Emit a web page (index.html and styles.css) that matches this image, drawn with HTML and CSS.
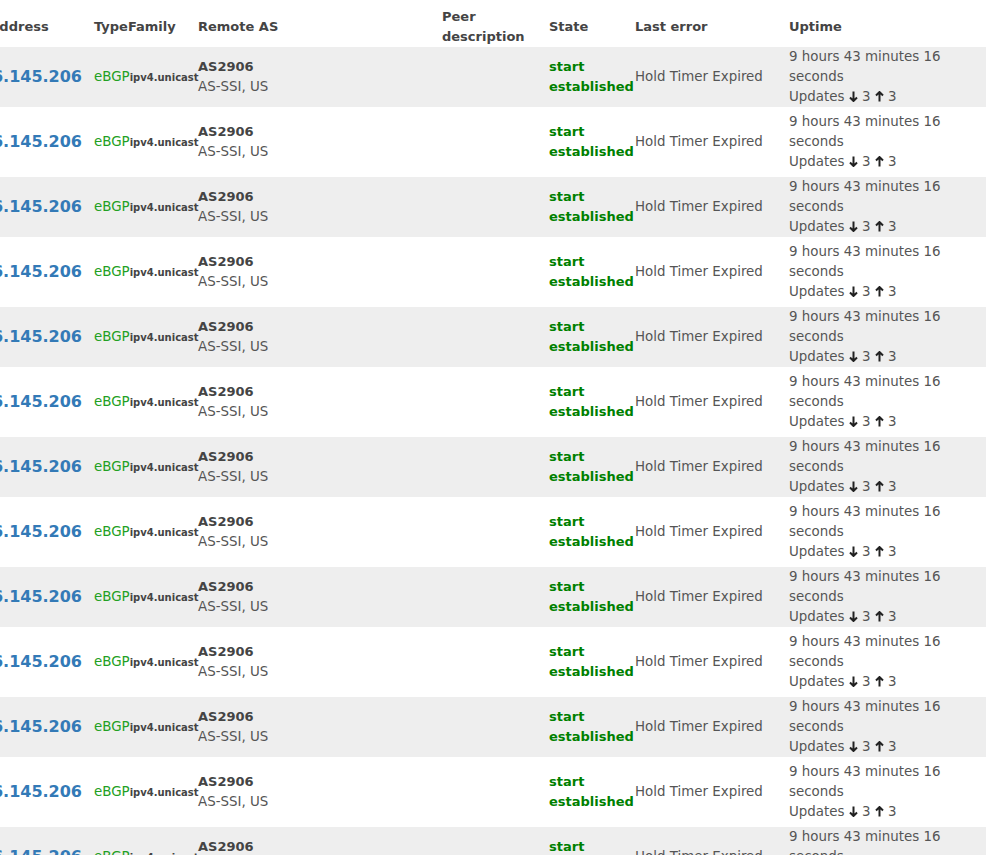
FILE: index.html
```html
<!DOCTYPE html>
<html>
<head>
<meta charset="utf-8">
<link rel="stylesheet" href="styles.css">
</head>
<body>
<div class="wrap">
<table class="peers">
<thead>
<tr>
<th class="c-addr">Address</th>
<th class="c-type">TypeFamily</th>
<th class="c-as">Remote AS</th>
<th class="c-desc">Peer<br>description</th>
<th class="c-state">State</th>
<th class="c-err">Last error</th>
<th class="c-up">Uptime</th>
</tr>
</thead>
<tbody>
<tr class="odd"><td class="addr">93.56.145.206</td><td><span class="ebgp">eBGP</span><span class="fam">ipv4.unicast</span></td><td><b>AS2906</b><br>AS-SSI, US</td><td></td><td class="state">start<br>established</td><td>Hold Timer Expired</td><td>9 hours 43 minutes 16 seconds<div class="upd">Updates <svg class="arr" viewBox="0 0 9 11"><path d="M4.5 0.5V10M1 6.5l3.5 3.5 3.5-3.5"/></svg> 3 <svg class="arr" viewBox="0 0 9 11"><path d="M4.5 10.5V1M1 4.5l3.5-3.5 3.5 3.5"/></svg> 3</div></td></tr>
<tr class="even"><td class="addr">93.56.145.206</td><td><span class="ebgp">eBGP</span><span class="fam">ipv4.unicast</span></td><td><b>AS2906</b><br>AS-SSI, US</td><td></td><td class="state">start<br>established</td><td>Hold Timer Expired</td><td>9 hours 43 minutes 16 seconds<div class="upd">Updates <svg class="arr" viewBox="0 0 9 11"><path d="M4.5 0.5V10M1 6.5l3.5 3.5 3.5-3.5"/></svg> 3 <svg class="arr" viewBox="0 0 9 11"><path d="M4.5 10.5V1M1 4.5l3.5-3.5 3.5 3.5"/></svg> 3</div></td></tr>
<tr class="odd"><td class="addr">93.56.145.206</td><td><span class="ebgp">eBGP</span><span class="fam">ipv4.unicast</span></td><td><b>AS2906</b><br>AS-SSI, US</td><td></td><td class="state">start<br>established</td><td>Hold Timer Expired</td><td>9 hours 43 minutes 16 seconds<div class="upd">Updates <svg class="arr" viewBox="0 0 9 11"><path d="M4.5 0.5V10M1 6.5l3.5 3.5 3.5-3.5"/></svg> 3 <svg class="arr" viewBox="0 0 9 11"><path d="M4.5 10.5V1M1 4.5l3.5-3.5 3.5 3.5"/></svg> 3</div></td></tr>
<tr class="even"><td class="addr">93.56.145.206</td><td><span class="ebgp">eBGP</span><span class="fam">ipv4.unicast</span></td><td><b>AS2906</b><br>AS-SSI, US</td><td></td><td class="state">start<br>established</td><td>Hold Timer Expired</td><td>9 hours 43 minutes 16 seconds<div class="upd">Updates <svg class="arr" viewBox="0 0 9 11"><path d="M4.5 0.5V10M1 6.5l3.5 3.5 3.5-3.5"/></svg> 3 <svg class="arr" viewBox="0 0 9 11"><path d="M4.5 10.5V1M1 4.5l3.5-3.5 3.5 3.5"/></svg> 3</div></td></tr>
<tr class="odd"><td class="addr">93.56.145.206</td><td><span class="ebgp">eBGP</span><span class="fam">ipv4.unicast</span></td><td><b>AS2906</b><br>AS-SSI, US</td><td></td><td class="state">start<br>established</td><td>Hold Timer Expired</td><td>9 hours 43 minutes 16 seconds<div class="upd">Updates <svg class="arr" viewBox="0 0 9 11"><path d="M4.5 0.5V10M1 6.5l3.5 3.5 3.5-3.5"/></svg> 3 <svg class="arr" viewBox="0 0 9 11"><path d="M4.5 10.5V1M1 4.5l3.5-3.5 3.5 3.5"/></svg> 3</div></td></tr>
<tr class="even"><td class="addr">93.56.145.206</td><td><span class="ebgp">eBGP</span><span class="fam">ipv4.unicast</span></td><td><b>AS2906</b><br>AS-SSI, US</td><td></td><td class="state">start<br>established</td><td>Hold Timer Expired</td><td>9 hours 43 minutes 16 seconds<div class="upd">Updates <svg class="arr" viewBox="0 0 9 11"><path d="M4.5 0.5V10M1 6.5l3.5 3.5 3.5-3.5"/></svg> 3 <svg class="arr" viewBox="0 0 9 11"><path d="M4.5 10.5V1M1 4.5l3.5-3.5 3.5 3.5"/></svg> 3</div></td></tr>
<tr class="odd"><td class="addr">93.56.145.206</td><td><span class="ebgp">eBGP</span><span class="fam">ipv4.unicast</span></td><td><b>AS2906</b><br>AS-SSI, US</td><td></td><td class="state">start<br>established</td><td>Hold Timer Expired</td><td>9 hours 43 minutes 16 seconds<div class="upd">Updates <svg class="arr" viewBox="0 0 9 11"><path d="M4.5 0.5V10M1 6.5l3.5 3.5 3.5-3.5"/></svg> 3 <svg class="arr" viewBox="0 0 9 11"><path d="M4.5 10.5V1M1 4.5l3.5-3.5 3.5 3.5"/></svg> 3</div></td></tr>
<tr class="even"><td class="addr">93.56.145.206</td><td><span class="ebgp">eBGP</span><span class="fam">ipv4.unicast</span></td><td><b>AS2906</b><br>AS-SSI, US</td><td></td><td class="state">start<br>established</td><td>Hold Timer Expired</td><td>9 hours 43 minutes 16 seconds<div class="upd">Updates <svg class="arr" viewBox="0 0 9 11"><path d="M4.5 0.5V10M1 6.5l3.5 3.5 3.5-3.5"/></svg> 3 <svg class="arr" viewBox="0 0 9 11"><path d="M4.5 10.5V1M1 4.5l3.5-3.5 3.5 3.5"/></svg> 3</div></td></tr>
<tr class="odd"><td class="addr">93.56.145.206</td><td><span class="ebgp">eBGP</span><span class="fam">ipv4.unicast</span></td><td><b>AS2906</b><br>AS-SSI, US</td><td></td><td class="state">start<br>established</td><td>Hold Timer Expired</td><td>9 hours 43 minutes 16 seconds<div class="upd">Updates <svg class="arr" viewBox="0 0 9 11"><path d="M4.5 0.5V10M1 6.5l3.5 3.5 3.5-3.5"/></svg> 3 <svg class="arr" viewBox="0 0 9 11"><path d="M4.5 10.5V1M1 4.5l3.5-3.5 3.5 3.5"/></svg> 3</div></td></tr>
<tr class="even"><td class="addr">93.56.145.206</td><td><span class="ebgp">eBGP</span><span class="fam">ipv4.unicast</span></td><td><b>AS2906</b><br>AS-SSI, US</td><td></td><td class="state">start<br>established</td><td>Hold Timer Expired</td><td>9 hours 43 minutes 16 seconds<div class="upd">Updates <svg class="arr" viewBox="0 0 9 11"><path d="M4.5 0.5V10M1 6.5l3.5 3.5 3.5-3.5"/></svg> 3 <svg class="arr" viewBox="0 0 9 11"><path d="M4.5 10.5V1M1 4.5l3.5-3.5 3.5 3.5"/></svg> 3</div></td></tr>
<tr class="odd"><td class="addr">93.56.145.206</td><td><span class="ebgp">eBGP</span><span class="fam">ipv4.unicast</span></td><td><b>AS2906</b><br>AS-SSI, US</td><td></td><td class="state">start<br>established</td><td>Hold Timer Expired</td><td>9 hours 43 minutes 16 seconds<div class="upd">Updates <svg class="arr" viewBox="0 0 9 11"><path d="M4.5 0.5V10M1 6.5l3.5 3.5 3.5-3.5"/></svg> 3 <svg class="arr" viewBox="0 0 9 11"><path d="M4.5 10.5V1M1 4.5l3.5-3.5 3.5 3.5"/></svg> 3</div></td></tr>
<tr class="even"><td class="addr">93.56.145.206</td><td><span class="ebgp">eBGP</span><span class="fam">ipv4.unicast</span></td><td><b>AS2906</b><br>AS-SSI, US</td><td></td><td class="state">start<br>established</td><td>Hold Timer Expired</td><td>9 hours 43 minutes 16 seconds<div class="upd">Updates <svg class="arr" viewBox="0 0 9 11"><path d="M4.5 0.5V10M1 6.5l3.5 3.5 3.5-3.5"/></svg> 3 <svg class="arr" viewBox="0 0 9 11"><path d="M4.5 10.5V1M1 4.5l3.5-3.5 3.5 3.5"/></svg> 3</div></td></tr>
<tr class="odd"><td class="addr">93.56.145.206</td><td><span class="ebgp">eBGP</span><span class="fam">ipv4.unicast</span></td><td><b>AS2906</b><br>AS-SSI, US</td><td></td><td class="state">start<br>established</td><td>Hold Timer Expired</td><td>9 hours 43 minutes 16 seconds<div class="upd">Updates <svg class="arr" viewBox="0 0 9 11"><path d="M4.5 0.5V10M1 6.5l3.5 3.5 3.5-3.5"/></svg> 3 <svg class="arr" viewBox="0 0 9 11"><path d="M4.5 10.5V1M1 4.5l3.5-3.5 3.5 3.5"/></svg> 3</div></td></tr>
<tr class="even"><td class="addr">93.56.145.206</td><td><span class="ebgp">eBGP</span><span class="fam">ipv4.unicast</span></td><td><b>AS2906</b><br>AS-SSI, US</td><td></td><td class="state">start<br>established</td><td>Hold Timer Expired</td><td>9 hours 43 minutes 16 seconds<div class="upd">Updates <svg class="arr" viewBox="0 0 9 11"><path d="M4.5 0.5V10M1 6.5l3.5 3.5 3.5-3.5"/></svg> 3 <svg class="arr" viewBox="0 0 9 11"><path d="M4.5 10.5V1M1 4.5l3.5-3.5 3.5 3.5"/></svg> 3</div></td></tr>
</tbody>
</table>
</div>
</body>
</html>
```
FILE: styles.css
```css
html, body {
  margin: 0;
  padding: 0;
  background: #fff;
  overflow: hidden;
}
body {
  font-family: "DejaVu Sans", Verdana, sans-serif;
  font-size: 13.4px;
  line-height: 20px;
  color: #555;
}
.wrap {
  margin-left: -56px;
  padding-top: 6px;
  width: 1042px;
}
.peers {
  border-collapse: collapse;
  table-layout: fixed;
  width: 1042px;
}
.peers th {
  font-size: 13px;
  font-weight: bold;
  color: #444;
  text-align: left;
  vertical-align: middle;
  padding: 1px 0 0 0;
  height: 40px;
}
.peers th.c-addr { text-align: center; width: 150px; }
.peers th.c-type { width: 104px; }
.peers th.c-as { width: 244px; }
.peers th.c-desc { width: 107px; }
.peers th.c-state { width: 86px; }
.peers th.c-err { width: 154px; }
.peers th.c-up { width: 197px; }
.peers td {
  padding: 0;
  vertical-align: middle;
  white-space: normal;
}
.peers tr.odd td {
  background: #eeeeee;
  height: 60px;
}
.peers tr.even td {
  padding: 5px 0;
  height: 60px;
}
.peers td.addr {
  text-align: right;
  padding-right: 12px;
  font-size: 16px;
  font-weight: bold;
  color: #337ab7;
  white-space: nowrap;
}
.peers tr.even td.addr { padding-right: 12px; }
.peers b { font-size: 13px; color: #444; }
.ebgp { color: #22a022; }
.fam {
  font-size: 10px;
  font-weight: bold;
  color: #444;
}
.peers td.state {
  font-size: 13px;
  color: #008000;
  font-weight: bold;
}
.upd { white-space: nowrap; }
.arr {
  width: 9px;
  height: 11px;
  vertical-align: -1px;
  fill: none;
  stroke: #222;
  stroke-width: 2;
}
```
